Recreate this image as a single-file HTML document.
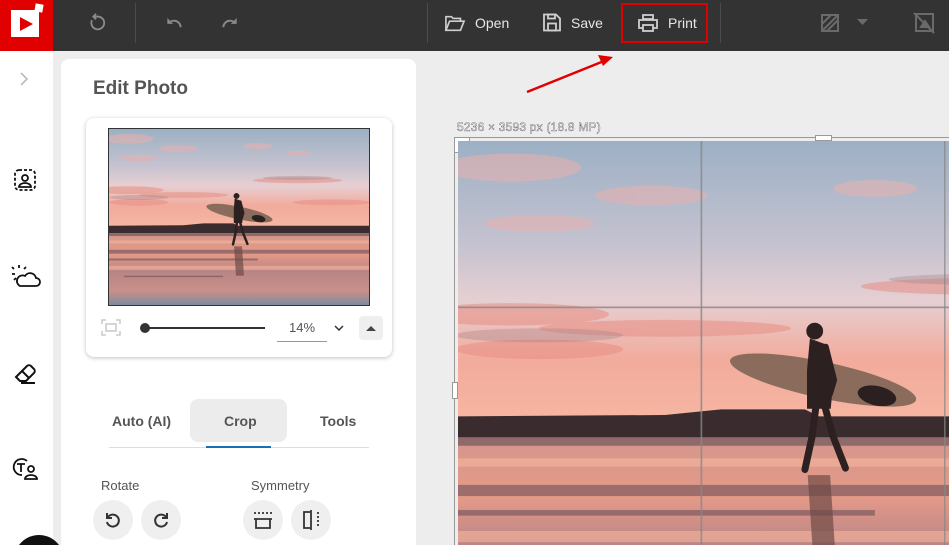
<!DOCTYPE html>
<html><head><meta charset="utf-8"><style>
*{margin:0;padding:0;box-sizing:border-box}
html,body{width:949px;height:545px;overflow:hidden}
body{background:#ededed;font-family:"Liberation Sans",Roboto,sans-serif}
#root{position:relative;width:949px;height:545px;overflow:hidden;background:#ededed}
.abs{position:absolute}
.tb{left:0;top:0;width:949px;height:51px;background:#333}
.sep{position:absolute;top:3px;width:1px;height:40px;background:#4c4c4c}
.tbt{position:absolute;top:15px;color:#e6e6e6;font-size:14px}
.side{left:0;top:51px;width:53px;height:494px;background:#fff}
.panel{left:61px;top:59px;width:355px;height:486px;background:#fff;border-radius:8px 8px 0 0}
.card{left:86px;top:118px;width:306px;height:239px;background:#fff;border-radius:8px;box-shadow:0 1px 4px rgba(0,0,0,.25)}
.cb{width:40px;height:40px;border-radius:50%;background:#efefef;top:500px}
</style></head><body><div id="root">
<div class="abs tb">
  <div class="abs" style="left:0;top:0;width:53px;height:51px;background:#e00000"></div>
  <svg class="abs" style="left:0;top:0" width="53" height="51"><rect x="11" y="10" width="28" height="27" fill="#fff"/><polygon points="20,17 20,31 33,24" fill="#e00000"/><rect x="35" y="4" width="8" height="8" fill="#fff" transform="rotate(10 39 8)"/></svg>
  <svg class="abs" style="left:86px;top:12px" width="22" height="22" viewBox="0 0 24 24" fill="none" stroke="#8a8a8a" stroke-width="2"><path d="M6.5 9A7 7 0 1 0 12 5H9"/><path d="M11 2L8 5l3 3"/></svg>
  <div class="sep" style="left:135px"></div>
  <svg class="abs" style="left:163px;top:13px" width="22" height="20" viewBox="0 0 24 24" fill="none" stroke="#8a8a8a" stroke-width="2.4"><path d="M20 17a8 8 0 0 0-14-5"/><path d="M4 6v7h7" fill="#8a8a8a" stroke="none"/></svg>
  <svg class="abs" style="left:219px;top:13px" width="22" height="20" viewBox="0 0 24 24" fill="none" stroke="#8a8a8a" stroke-width="2.4"><path d="M4 17a8 8 0 0 1 14-5"/><path d="M20 6v7h-7" fill="#8a8a8a" stroke="none"/></svg>
  <div class="sep" style="left:427px"></div>
  <svg class="abs" style="left:444px;top:13px" width="22" height="20" viewBox="0 0 24 22" fill="none" stroke="#cfcfcf" stroke-width="1.8"><path d="M2 19V4h6l2 2h8v3"/><path d="M2 19l4-10h16l-4 10z"/></svg>
  <div class="tbt" style="left:475px">Open</div>
  <svg class="abs" style="left:542px;top:12px" width="20" height="21" viewBox="0 0 20 20" fill="none" stroke="#cfcfcf" stroke-width="1.8"><path d="M2 2h12l4 4v12H2z"/><rect x="6" y="2" width="7" height="4"/><rect x="6" y="11" width="8" height="7"/></svg>
  <div class="tbt" style="left:571px">Save</div>
  <svg class="abs" style="left:637px;top:12px" width="22" height="22" viewBox="0 0 22 22" fill="none" stroke="#cfcfcf" stroke-width="1.8"><rect x="6" y="3" width="10" height="4"/><path d="M6 16H2V8h18v8h-4"/><rect x="6" y="13" width="10" height="6"/></svg>
  <div class="tbt" style="left:668px">Print</div>
  <div class="abs" style="left:621px;top:3px;width:87px;height:40px;border:2px solid #e00000"></div>
  <div class="sep" style="left:720px"></div>
  <svg class="abs" style="left:821px;top:14px" width="18" height="18" viewBox="0 0 18 18" fill="none" stroke="#6a6a6a" stroke-width="2"><rect x="1" y="1" width="16" height="16"/><path d="M1 10L10 1M6 17L17 6M1 17L17 1" /></svg>
  <svg class="abs" style="left:857px;top:19px" width="11" height="6"><polygon points="0,0 11,0 5.5,6" fill="#6a6a6a"/></svg>
  <svg class="abs" style="left:913px;top:12px" width="22" height="22" viewBox="0 0 22 22" fill="none" stroke="#6a6a6a" stroke-width="2"><rect x="3" y="2" width="17" height="17"/><path d="M1 1l20 20"/><path d="M8 15l4-6 4 6z" fill="#6a6a6a"/></svg>
</div>
<div class="abs side"></div>
<svg class="abs" style="left:18px;top:71px" width="12" height="16" viewBox="0 0 12 16" fill="none" stroke="#bbb" stroke-width="1.6"><path d="M3 2l6 6-6 6"/></svg>
<svg class="abs" style="left:13px;top:168px" width="24" height="24" viewBox="0 0 24 24" fill="none" stroke="#111" stroke-width="1.8"><rect x="2" y="2" width="20" height="20" rx="4" stroke-dasharray="3 2"/><circle cx="12" cy="10" r="3"/><path d="M6 19a6 4 0 0 1 12 0z"/></svg>
<svg class="abs" style="left:11px;top:264px" width="30" height="26" viewBox="0 0 30 26" fill="none" stroke="#111" stroke-width="1.8"><path d="M9 22h16a4 4 0 0 0 0-8 6 6 0 0 0-11-2 5 5 0 0 0-5 10z"/><path d="M4 10h-3M8 4V1M3 5L1 3M13 5l2-2M5 14l-2 2"/></svg>
<svg class="abs" style="left:13px;top:360px" width="26" height="26" viewBox="0 0 26 26" fill="none" stroke="#111" stroke-width="2"><path d="M3 17L14 6a3 3 0 0 1 4 0l3 3a3 3 0 0 1 0 4L13 21H7z"/><path d="M9 11l7 7M8 23h14"/></svg>
<svg class="abs" style="left:11px;top:456px" width="28" height="26" viewBox="0 0 28 26" fill="none" stroke="#111" stroke-width="1.8"><path d="M11 19a8 8 0 1 1 5-14"/><path d="M6 8h8M10 8v8"/><circle cx="20" cy="13" r="3"/><path d="M14 23a6 4 0 0 1 12 0z"/></svg>
<svg class="abs" style="left:14px;top:535px" width="50" height="10"><circle cx="25" cy="25" r="25" fill="#111"/></svg>

<div class="abs panel"></div>
<div class="abs" style="left:93px;top:78px;font-size:19px;font-weight:bold;color:#555">Edit Photo</div>
<div class="abs card"></div>
<svg class="abs" style="left:108px;top:128px;border:1px solid #333" width="262" height="178" viewBox="0 0 524 360" preserveAspectRatio="none"><use href="#photo"/></svg>
<svg class="abs" style="left:101px;top:319px" width="20" height="17" viewBox="0 0 20 17" fill="none" stroke="#ccc" stroke-width="1.6"><path d="M1 5V1h4M15 1h4v4M19 12v4h-4M5 16H1v-4"/><rect x="5" y="5" width="10" height="7"/></svg>
<div class="abs" style="left:140px;top:323px;width:10px;height:10px;border-radius:50%;background:#333"></div>
<div class="abs" style="left:145px;top:327px;width:120px;height:2px;background:#333"></div>
<div class="abs" style="left:289px;top:320px;font-size:13px;color:#555">14%</div>
<div class="abs" style="left:277px;top:341px;width:50px;height:1px;background:#999"></div>
<svg class="abs" style="left:334px;top:325px" width="10" height="6" viewBox="0 0 10 6" fill="none" stroke="#333" stroke-width="1.5"><path d="M1 1l4 4 4-4"/></svg>
<div class="abs" style="left:359px;top:316px;width:24px;height:24px;background:#efefef;border-radius:4px"></div>
<svg class="abs" style="left:366px;top:326px" width="10" height="5"><polygon points="0,5 10,5 5,0" fill="#444"/></svg>

<div class="abs" style="left:190px;top:399px;width:97px;height:43px;background:#ececec;border-radius:8px"></div>
<div class="abs" style="left:112px;top:413px;font-size:14px;font-weight:bold;color:#555">Auto (AI)</div>
<div class="abs" style="left:224px;top:413px;font-size:14px;font-weight:bold;color:#555">Crop</div>
<div class="abs" style="left:320px;top:413px;font-size:14px;font-weight:bold;color:#555">Tools</div>
<div class="abs" style="left:109px;top:447px;width:260px;height:1px;background:#ddd"></div>
<div class="abs" style="left:206px;top:446px;width:65px;height:2px;background:#1a6fb0"></div>
<div class="abs" style="left:101px;top:478px;font-size:13px;color:#555">Rotate</div>
<div class="abs" style="left:251px;top:478px;font-size:13px;color:#555">Symmetry</div>
<div class="abs cb" style="left:93px"></div><div class="abs cb" style="left:141px"></div><div class="abs cb" style="left:243px"></div><div class="abs cb" style="left:291px"></div>
<svg class="abs" style="left:104px;top:511px" width="18" height="18" viewBox="0 0 18 18" fill="none" stroke="#333" stroke-width="2"><path d="M4 6a6 6 0 1 1-1 5"/><path d="M3 2v5h5"/></svg>
<svg class="abs" style="left:152px;top:511px" width="18" height="18" viewBox="0 0 18 18" fill="none" stroke="#333" stroke-width="2"><path d="M14 6a6 6 0 1 0 1 5"/><path d="M15 2v5h-5"/></svg>
<svg class="abs" style="left:253px;top:511px" width="20" height="18" viewBox="0 0 20 18" fill="none" stroke="#333" stroke-width="1.8"><path d="M1 2h18" stroke-dasharray="2 2"/><path d="M1 8h18M3 8v9h14V8"/></svg>
<svg class="abs" style="left:302px;top:510px" width="18" height="20" viewBox="0 0 18 20" fill="none" stroke="#333" stroke-width="1.8"><path d="M9 0v20"/><path d="M8 2H2v16h6"/><path d="M16 2v16" stroke-dasharray="2 2"/></svg>

<div class="abs" style="left:457px;top:120px;font-size:12px;color:#fff;-webkit-text-stroke:0.3px #222;letter-spacing:.2px">5236 × 3593 px (18.8 MP)</div>
<div class="abs" style="left:454px;top:137px;width:495px;height:408px;border:1px solid #999;border-right:none;border-bottom:none"></div>
<div class="abs" style="left:454px;top:137px;width:16px;height:16px;background:#fff;border:1px solid #999"></div>
<div class="abs" style="left:815px;top:135px;width:17px;height:6px;background:#fff;border:1px solid #999"></div>
<div class="abs" style="left:452px;top:382px;width:6px;height:17px;background:#fff;border:1px solid #999"></div>
<svg class="abs" style="left:458px;top:141px" width="491" height="404" viewBox="2 1 351 289" preserveAspectRatio="none">
<defs>
<linearGradient id="sky" x1="0" y1="0" x2="0" y2="1"><stop offset="0" stop-color="#9cb0c4"/><stop offset=".35" stop-color="#c4c2d0"/><stop offset=".55" stop-color="#e6cfd2"/><stop offset=".75" stop-color="#f2ab9c"/><stop offset="1" stop-color="#f7b8a3"/></linearGradient>
<linearGradient id="sea" x1="0" y1="0" x2="0" y2="1"><stop offset="0" stop-color="#d2968c"/><stop offset=".3" stop-color="#e59a88"/><stop offset=".55" stop-color="#b88486"/><stop offset=".8" stop-color="#c99088"/><stop offset="1" stop-color="#7f8c9e"/></linearGradient>
<g id="photo">
<rect width="524" height="210" fill="url(#sky)"/>
<g fill="#eab0ae" opacity=".55"><ellipse cx="40" cy="20" rx="50" ry="10"/><ellipse cx="140" cy="40" rx="40" ry="7"/><ellipse cx="300" cy="35" rx="30" ry="6"/><ellipse cx="380" cy="50" rx="25" ry="5"/><ellipse cx="60" cy="60" rx="40" ry="6"/></g>
<g fill="#e88e84" opacity=".55"><ellipse cx="40" cy="125" rx="70" ry="8"/><ellipse cx="150" cy="135" rx="90" ry="6"/><ellipse cx="380" cy="105" rx="90" ry="6"/><ellipse cx="450" cy="150" rx="80" ry="6"/><ellipse cx="60" cy="150" rx="60" ry="7"/></g>
<g fill="#a08088" opacity=".35"><ellipse cx="60" cy="140" rx="60" ry="5"/><ellipse cx="380" cy="100" rx="70" ry="4"/></g>
<rect y="210" width="524" height="150" fill="url(#sea)"/>
<path d="M0 198 L150 197 L190 193 L250 193 L260 198 L524 198 L524 213 L0 213z" fill="#3a2c2e"/>
<rect y="213" width="524" height="6" fill="#8f6a6a"/>
<g fill="#6c5058" opacity=".6"><rect x="0" y="247" width="524" height="8"/><rect x="0" y="265" width="300" height="4"/><rect x="30" y="300" width="200" height="3"/></g>
<g fill="#f5b59e" opacity=".6"><rect x="0" y="228" width="524" height="6"/><rect x="0" y="280" width="524" height="8"/></g>
<path d="M252 240 L268 240 L272 300 L256 300z" fill="#6e4a46" opacity=".7"/>
<g transform="rotate(12 263 172)"><ellipse cx="263" cy="172" rx="68" ry="13" fill="#8b6c5c"/><ellipse cx="303" cy="175" rx="14" ry="7" fill="#2a2020"/></g>
<g fill="#2c2020" stroke="#2c2020" stroke-linecap="round">
<circle cx="257" cy="137" r="5.5"/>
<path d="M254 143 L265 147 L270 170 L268 192 L252 192 L252 165z"/>
<path d="M258 190 L255 213 L250 236" stroke-width="5" fill="none"/>
<path d="M264 190 L270 212 L279 235" stroke-width="5" fill="none"/>
<path d="M265 148 L271 172 L268 182" stroke-width="4" fill="none"/>
</g>
</g></defs>
<use href="#photo"/>
<line x1="176" y1="0" x2="176" y2="290" stroke="#888" stroke-width="1.2" opacity=".8"/>
<line x1="0" y1="120" x2="353" y2="120" stroke="#888" stroke-width="1.2" opacity=".8"/>
<line x1="350" y1="0" x2="350" y2="290" stroke="#888" stroke-width="1" opacity=".8"/>
</svg>
<svg class="abs" style="left:520px;top:50px" width="100" height="50"><line x1="7" y1="42" x2="84" y2="11" stroke="#e00000" stroke-width="2.5"/><polygon points="93,7 78,5 83,16" fill="#e00000"/></svg>
</div></body></html>
